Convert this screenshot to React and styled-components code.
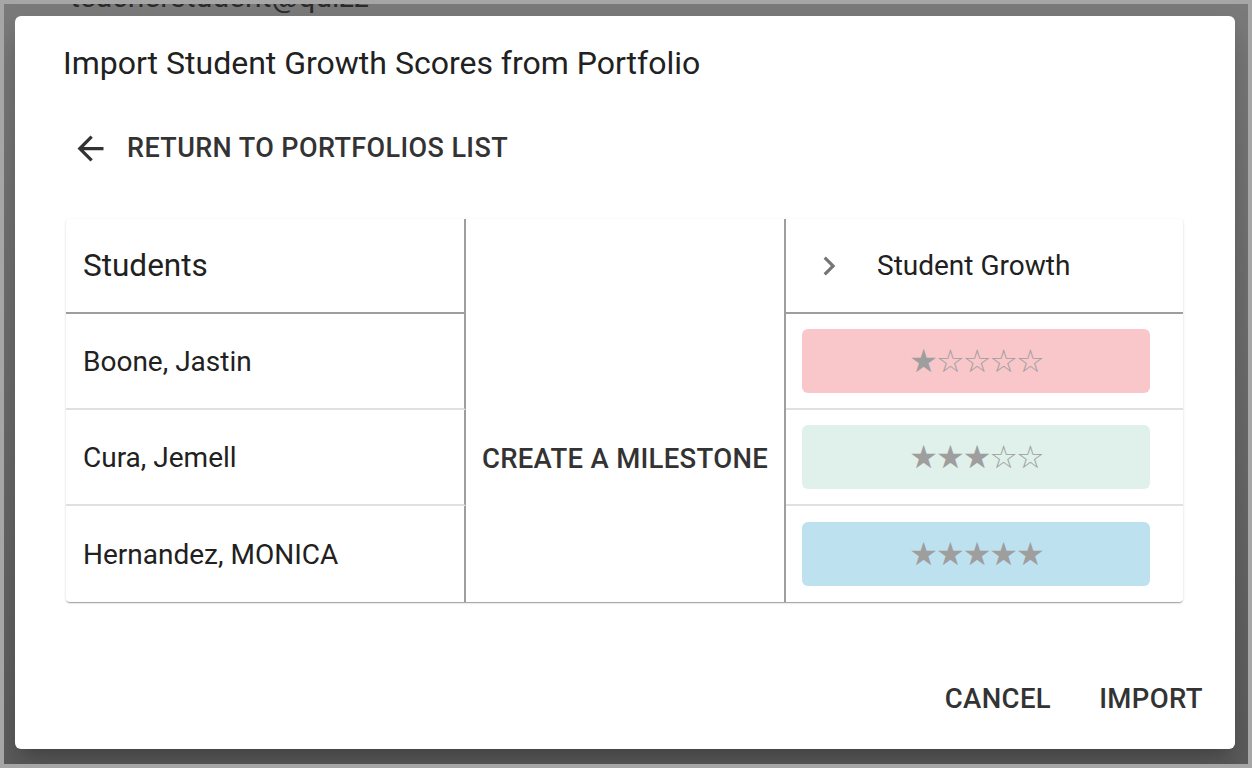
import React from "react";
import styled, { createGlobalStyle } from "styled-components";

const Global = createGlobalStyle`
  * { box-sizing: border-box; }
  html, body { margin: 0; padding: 0; }
  body {
    background: #a6a6a6;
    font-family: Roboto, "Noto Sans", "Liberation Sans", sans-serif;
  }
`;

const Frame = styled.div`
  height: 100vh;
  padding: 4px;
  display: flex;
`;

const Backdrop = styled.div`
  position: relative;
  flex: 1;
  overflow: hidden;
  background: linear-gradient(#7a7a7a, #5d5d5d);
  padding: 12px 13px 15px 11px;
  display: flex;
`;

const PageBehind = styled.div`
  position: absolute;
  top: -25px;
  left: 66px;
  font-size: 30px;
  color: #2b2b2b;
`;

const Dialog = styled.div`
  position: relative;
  flex: 1;
  background: #fff;
  border-radius: 6px;
  box-shadow: 0 11px 15px -7px rgba(0,0,0,.2), 0 24px 38px 3px rgba(0,0,0,.14);
  display: flex;
  flex-direction: column;
`;

const Title = styled.h2`
  margin: 0;
  padding: 27px 48px 0;
  font-size: 32px;
  line-height: 40px;
  font-weight: 400;
  color: #212121;
`;

const Content = styled.div`
  flex: 1;
  padding: 0 52px 0 51px;
  display: flex;
  flex-direction: column;
`;

const BackButton = styled.button`
  align-self: flex-start;
  margin: 41px 0 0 5px;
  height: 48px;
  padding: 0;
  border: 0;
  background: none;
  display: flex;
  align-items: center;
  gap: 17px;
  font-family: inherit;
  font-size: 27px;
  font-weight: 500;
  letter-spacing: 0.4px;
  color: #333;
  cursor: pointer;
`;

const Card = styled.div`
  margin-top: 47px;
  border-radius: 4px;
  background: #fff;
  box-shadow: 0 2px 1px -1px rgba(0,0,0,.2), 0 1px 1px 0 rgba(0,0,0,.14), 0 1px 3px 0 rgba(0,0,0,.12);
  display: grid;
  grid-template-columns: 400px 320px 1fr;
  grid-template-rows: 95px repeat(3, 96px);
  overflow: hidden;
`;

const Cell = styled.div`
  grid-column: ${(p) => p.$col};
  display: flex;
  align-items: center;
  padding: ${(p) => (p.$col === 3 ? "0 33px 0 16px" : "0 17px")};
  border-right: ${(p) => (p.$col === 1 ? "2px solid #9e9e9e" : "0")};
  border-bottom: ${(p) =>
    p.$head ? "2px solid #9e9e9e" : p.$last ? "0" : "2px solid #e0e0e0"};
  font-size: ${(p) => p.$size || "28px"};
  color: #212121;
`;

const HeadGroup = styled.div`
  display: flex;
  align-items: center;
  gap: 29px;
  padding-left: 8px;
`;

const Middle = styled.div`
  grid-column: 2;
  grid-row: 1 / -1;
  border-right: 2px solid #9e9e9e;
  padding-top: 95px;
  display: flex;
  align-items: center;
  justify-content: center;
  font-size: 27.5px;
  font-weight: 500;
  letter-spacing: 0.3px;
  color: #333;
`;

const Pill = styled.div`
  width: 348px;
  height: 64px;
  border-radius: 6px;
  background: ${(p) => p.$bg};
  display: flex;
  align-items: center;
  justify-content: center;
  font-family: "DejaVu Sans", sans-serif;
  font-size: 32px;
  letter-spacing: -2px;
  color: #9e9e9e;
`;

const Footer = styled.div`
  display: flex;
  justify-content: flex-end;
  gap: 24px;
  padding: 0 20px 27px 0;
`;

const TextButton = styled.button`
  height: 48px;
  padding: 0 12px;
  border: 0;
  background: none;
  font-family: inherit;
  font-size: 27.5px;
  font-weight: 500;
  letter-spacing: 0.4px;
  color: #333;
  cursor: pointer;
`;

const ArrowBack = () => (
  <svg width="39" height="39" viewBox="0 0 24 24" fill="#333">
    <path d="M20 11H7.83l5.59-5.59L12 4l-8 8 8 8 1.41-1.41L7.83 13H20v-2z" />
  </svg>
);

const Chevron = () => (
  <svg width="38" height="38" viewBox="0 0 24 24" fill="#757575">
    <path d="M10 6 8.59 7.41 13.17 12l-4.58 4.59L10 18l6-6z" />
  </svg>
);

const students = [
  { name: "Boone, Jastin", stars: 1, bg: "#f9c7c9" },
  { name: "Cura, Jemell", stars: 3, bg: "#dff1ea" },
  { name: "Hernandez, MONICA", stars: 5, bg: "#bee1f0" },
];

const starText = (n) => "★".repeat(n) + "☆".repeat(5 - n);

export default function App() {
  return (
    <>
      <Global />
      <Frame>
        <Backdrop>
          <PageBehind>teacherstudent@quizz</PageBehind>
          <Dialog>
            <Title>Import Student Growth Scores from Portfolio</Title>
            <Content>
              <BackButton>
                <ArrowBack />
                RETURN TO PORTFOLIOS LIST
              </BackButton>
              <Card>
                <Cell $col={1} $head $size="31.5px">Students</Cell>
                <Middle>CREATE A MILESTONE</Middle>
                <Cell $col={3} $head>
                  <HeadGroup>
                    <Chevron />
                    Student Growth
                  </HeadGroup>
                </Cell>
                {students.map((s, i) => (
                  <React.Fragment key={s.name}>
                    <Cell $col={1} $last={i === students.length - 1}>
                      {s.name}
                    </Cell>
                    <Cell $col={3} $last={i === students.length - 1}>
                      <Pill $bg={s.bg}>{starText(s.stars)}</Pill>
                    </Cell>
                  </React.Fragment>
                ))}
              </Card>
            </Content>
            <Footer>
              <TextButton>CANCEL</TextButton>
              <TextButton>IMPORT</TextButton>
            </Footer>
          </Dialog>
        </Backdrop>
      </Frame>
    </>
  );
}
